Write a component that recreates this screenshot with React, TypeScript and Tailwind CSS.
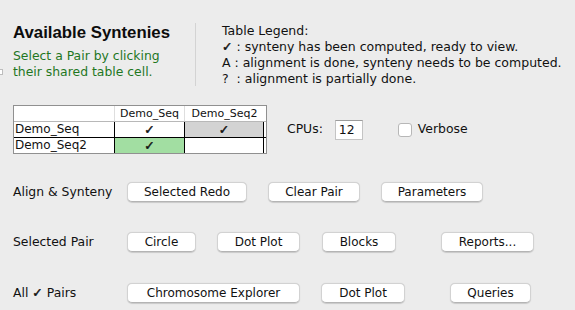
import React from "react";

const Btn = ({ w, ml, children }: { w: string; ml?: string; children: React.ReactNode }) => (
  <div
    className={`${w} ${ml ?? ""} h-[20px] flex items-center justify-center bg-white rounded-[5px] border border-[#d2d2d2] border-b-[#b4b4b4] shadow-[0_0.5px_1px_rgba(0,0,0,0.15)] text-[12px] text-[#111]`}
  >
    {children}
  </div>
);

const Check = () => (
  <span className="text-[12.5px] [-webkit-text-stroke:0.5px_#111]">✓</span>
);

export default function App() {
  return (
    <div
      className="relative w-[575px] h-[310px] bg-[#ececec] overflow-hidden text-[#111]"
      style={{ fontFamily: '"DejaVu Sans", "Liberation Sans", sans-serif' }}
    >
      <div className="absolute left-0 top-[69px] w-[3px] h-[6px] bg-white border border-l-0 border-[#bdbdbd]" />

      {/* Header */}
      <div className="flex pt-[23px] pl-[13px]">
        <div className="w-[182px]">
          <div
            className="text-[16.8px] leading-[20px] font-bold text-[#0d0d0d]"
            style={{ fontFamily: '"Liberation Sans", sans-serif' }}
          >
            Available Syntenies
          </div>
          <div className="mt-[5px] text-[12.4px] leading-[16px] text-[#1f771f]">
            <div>Select a Pair by clicking</div>
            <div>their shared table cell.</div>
          </div>
        </div>
        <div className="w-px h-[63px] bg-[#d3d3d3]" />
        <div className="ml-[26px] text-[12.5px] leading-[16px]">
          <div>Table Legend:</div>
          <div>
            <Check /> : synteny has been computed, ready to view.
          </div>
          <div>A : alignment is done, synteny needs to be computed.</div>
          <div>?&nbsp; : alignment is partially done.</div>
        </div>
      </div>

      {/* Table row */}
      <div className="flex items-center mt-[18px] pl-[13px] text-[12.4px]">
        <div className="w-[254px] h-[49px] border border-[#909090] bg-white leading-[15px] text-[12px]">
          <div className="flex h-[16px] border-b border-[#b8b8b8] text-[11px]">
            <div className="w-[101px] border-r border-[#dedede]" />
            <div className="w-[70px] border-r border-[#dedede] text-center">Demo_Seq</div>
            <div className="w-[79px] text-center">Demo_Seq2</div>
          </div>
          <div className="flex h-[16px] border-b border-black">
            <div className="w-[101px] border-r border-black pl-[1px]">Demo_Seq</div>
            <div className="w-[70px] border-r border-black text-center">
              <Check />
            </div>
            <div className="w-[79px] border-r border-black bg-[#d3d3d3] text-center">
              <Check />
            </div>
          </div>
          <div className="flex h-[15px]">
            <div className="w-[101px] border-r border-black pl-[1px]">Demo_Seq2</div>
            <div className="w-[70px] border-r border-black bg-[#a2dea2] text-center">
              <Check />
            </div>
            <div className="w-[79px] border-r border-black" />
          </div>
        </div>
        <div className="ml-[20px]">CPUs:</div>
        <div className="ml-[12px] w-[28px] h-[20px] bg-white border border-[#c4c4c4] border-t-[#9c9c9c] pl-[3px] leading-[18px]">
          12
        </div>
        <div className="ml-[35px] w-[14px] h-[14px] bg-white rounded-[3px] border border-[#b7b7b7]" />
        <div className="ml-[6px]">Verbose</div>
      </div>

      {/* Button rows */}
      <div className="flex items-center mt-[28px] pl-[13px] text-[12.4px]">
        <div className="w-[114px]">Align &amp; Synteny</div>
        <Btn w="w-[120px]">Selected Redo</Btn>
        <Btn w="w-[92px]" ml="ml-[21px]">Clear Pair</Btn>
        <Btn w="w-[102px]" ml="ml-[21px]">Parameters</Btn>
      </div>
      <div className="flex items-center mt-[30px] pl-[13px] text-[12.4px]">
        <div className="w-[114px]">Selected Pair</div>
        <Btn w="w-[69px]">Circle</Btn>
        <Btn w="w-[83px]" ml="ml-[21px]">Dot Plot</Btn>
        <Btn w="w-[74px]" ml="ml-[22px]">Blocks</Btn>
        <Btn w="w-[93px]" ml="ml-[45px]">Reports...</Btn>
      </div>
      <div className="flex items-center mt-[31px] pl-[13px] text-[12.4px]">
        <div className="w-[114px]">
          All <Check /> Pairs
        </div>
        <Btn w="w-[173px]">Chromosome Explorer</Btn>
        <Btn w="w-[84px]" ml="ml-[21px]">Dot Plot</Btn>
        <Btn w="w-[81px]" ml="ml-[45px]">Queries</Btn>
      </div>
    </div>
  );
}
